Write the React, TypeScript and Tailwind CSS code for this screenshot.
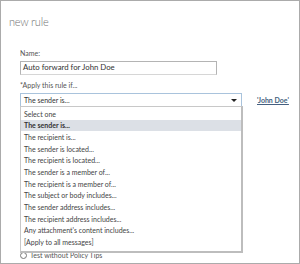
const conditions = [
  'The recipient is...',
  'The sender is located...',
  'The recipient is located...',
  'The sender is a member of...',
  'The recipient is a member of...',
  'The subject or body includes...',
  'The sender address includes...',
  'The recipient address includes...',
  "Any attachment's content includes...",
  '[Apply to all messages]',
]

export default function App() {
  return (
    <div className="relative h-[264px] w-[300px] overflow-hidden border border-[#ababab] bg-white font-['Lato',sans-serif]">
      <h1 className="pl-[8px] pt-[14px] text-[11px] font-light leading-[14px] tracking-[-0.2px] text-[#6f6f6f]">
        new rule
      </h1>

      <div className="pl-[19px] pt-[19px]">
        <label className="block text-[7px] leading-[10px] text-[#555]">
          Name:
        </label>
        <div className="mt-[3px] flex h-[14px] w-[197px] items-center border border-[#b4b4b4] border-b-[#d6d6d6] px-[2px] text-[7.8px] text-[#333]">
          Auto forward for John Doe
        </div>

        <label className="mt-[5px] block text-[7px] leading-[10px] text-[#555]">
          *Apply this rule if...
        </label>
        <div className="mt-[3px] flex items-center gap-[15px]">
          <div className="flex h-[14px] w-[222px] items-center justify-between border border-[#a9c3dc] px-[3px] text-[7px] text-[#333]">
            <span>The sender is...</span>
            <span className="mr-[1px] h-0 w-0 border-x-[3px] border-t-[3px] border-x-transparent border-t-[#222]" />
          </div>
          <a className="text-[7px] font-bold text-[#445f80] underline">
            'John Doe'
          </a>
        </div>

        <div className="mt-[143px] flex items-center gap-[3px] text-[7px] leading-[10px] text-[#555]">
          <span className="h-[7px] w-[7px] rounded-full border border-[#777]" />
          Test without Policy Tips
        </div>
      </div>

      <ul className="absolute left-[19px] top-[105px] h-[147px] w-[223px] border border-[#c8c8c8] border-b-2 border-r-2 border-b-[#bdbdbd] border-r-[#bdbdbd] bg-white pt-[1px] text-[7px] text-[#444]">
        <li className="flex h-[11.7px] items-center px-[3px]">Select one</li>
        <li className="flex h-[11.7px] items-center bg-[#dce0e6] px-[3px] font-bold text-[#333]">
          The sender is...
        </li>
        {conditions.map((c) => (
          <li key={c} className="flex h-[11.7px] items-center px-[3px]">
            {c}
          </li>
        ))}
      </ul>
    </div>
  )
}
